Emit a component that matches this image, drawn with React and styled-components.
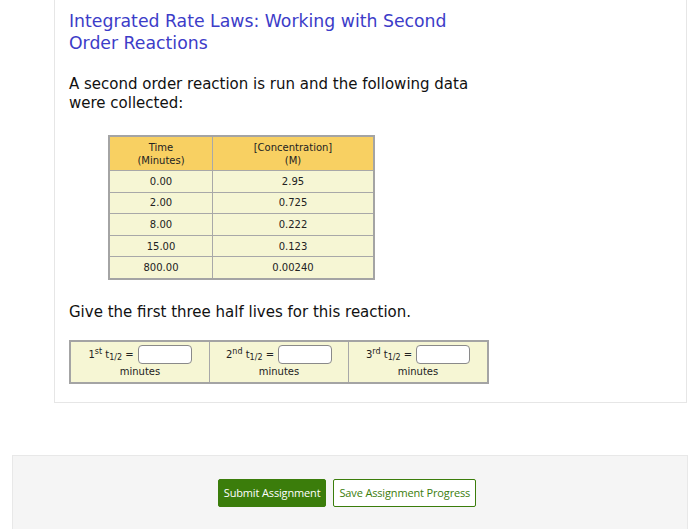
import React from 'react';
import styled, { createGlobalStyle } from 'styled-components';

const GlobalStyle = createGlobalStyle`
  html, body {
    margin: 0;
    padding: 0;
    background: #ffffff;
  }
  body {
    font-family: "DejaVu Sans", Verdana, sans-serif;
    overflow: hidden;
  }
`;

const Page = styled.div`
  width: 700px;
  height: 529px;
  overflow: hidden;
`;

const QuestionCard = styled.div`
  margin: -1px 0 0 54px;
  width: 633px;
  box-sizing: border-box;
  border: 1px solid #e6e6e6;
  background: #fff;
  padding: 10px 14px 18px 14px;
`;

const Title = styled.h2`
  margin: 0;
  font-size: 17.3px;
  line-height: 22px;
  font-weight: normal;
  color: #3c3cc8;
`;

const Text = styled.p`
  margin: ${(p) => p.$margin || '0'};
  font-size: 15px;
  line-height: 19px;
  color: #111;
`;

const DataTable = styled.table`
  margin: 22px 0 0 39px;
  border-collapse: collapse;
  border: 2px solid #a4a4a4;
  font-size: 10px;
  color: #222;
`;

const HeadCell = styled.th`
  width: ${(p) => p.$width}px;
  height: 33px;
  padding: 0;
  font-weight: normal;
  line-height: 13px;
  background: #f8d062;
  border: 1px solid #a8a8a8;
  text-align: center;
`;

const Cell = styled.td`
  height: 20.6px;
  padding: 0;
  background: #f6f6d4;
  border: 1px solid #a8a8a8;
  text-align: center;
`;

const AnswerTable = styled.table`
  margin-top: 18px;
  border-collapse: collapse;
  border: 2px solid #a4a4a4;
  font-size: 10px;
  color: #222;
`;

const AnswerCell = styled.td`
  width: 138px;
  height: 40px;
  padding: 0;
  background: #f6f6d4;
  border: 1px solid #a8a8a8;
  text-align: center;
  vertical-align: middle;
`;

const AnswerLine = styled.div`
  display: flex;
  align-items: center;
  justify-content: center;
  gap: 4px;
  line-height: 14px;
`;

const Sub = styled.sub`
  font-size: 8px;
  vertical-align: -2px;
`;

const Sup = styled.sup`
  font-size: 8px;
  vertical-align: 4px;
`;

const Blank = styled.input`
  width: 54px;
  height: 19px;
  box-sizing: border-box;
  border: 1px solid #8a8a8a;
  border-radius: 4px;
  background: #fff;
  padding: 0;
`;

const Units = styled.div`
  line-height: 14px;
`;

const Footer = styled.div`
  margin: 52px 0 0 12px;
  width: 676px;
  height: 100px;
  box-sizing: border-box;
  background: #f5f5f5;
  border: 1px solid #e8e8e8;
  padding-top: 23px;
  display: flex;
  justify-content: center;
  gap: 7px;
`;

const Button = styled.button`
  height: 28px;
  padding: 0 5px;
  font-family: "Open Sans", sans-serif;
  font-size: 11px;
  letter-spacing: -0.15px;
  border-radius: 2px;
  border: 1.5px solid #3b7d0b;
  background: ${(p) => (p.$primary ? '#3b7d0b' : '#fff')};
  color: ${(p) => (p.$primary ? '#fff' : '#3b7d0b')};
  margin-right: ${(p) => (p.$primary ? '0' : '6px')};
`;

const rows = [
  ['0.00', '2.95'],
  ['2.00', '0.725'],
  ['8.00', '0.222'],
  ['15.00', '0.123'],
  ['800.00', '0.00240'],
];

const halves = ['st', 'nd', 'rd'];

export default function App() {
  return (
    <Page>
      <GlobalStyle />
      <QuestionCard>
        <Title>
          Integrated Rate Laws: Working with Second
          <br />
          Order Reactions
        </Title>
        <Text $margin="21px 0 0 0">
          A second order reaction is run and the following data
          <br />
          were collected:
        </Text>
        <DataTable>
          <thead>
            <tr>
              <HeadCell $width={102}>
                Time
                <br />
                (Minutes)
              </HeadCell>
              <HeadCell $width={160}>
                [Concentration]
                <br />
                (M)
              </HeadCell>
            </tr>
          </thead>
          <tbody>
            {rows.map(([t, c]) => (
              <tr key={t}>
                <Cell>{t}</Cell>
                <Cell>{c}</Cell>
              </tr>
            ))}
          </tbody>
        </DataTable>
        <Text $margin="23px 0 0 0">Give the first three half lives for this reaction.</Text>
        <AnswerTable>
          <tbody>
            <tr>
              {halves.map((s, i) => (
                <AnswerCell key={s}>
                  <AnswerLine>
                    <span>
                      {i + 1}
                      <Sup>{s}</Sup> t<Sub>1/2</Sub> =
                    </span>
                    <Blank type="text" />
                  </AnswerLine>
                  <Units>minutes</Units>
                </AnswerCell>
              ))}
            </tr>
          </tbody>
        </AnswerTable>
      </QuestionCard>
      <Footer>
        <Button $primary>Submit Assignment</Button>
        <Button>Save Assignment Progress</Button>
      </Footer>
    </Page>
  );
}
